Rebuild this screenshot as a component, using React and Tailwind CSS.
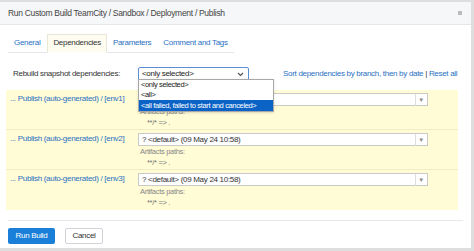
import React from "react";

const font = { fontFamily: '"Liberation Sans", Arial, sans-serif' };

const Chevron = () => (
  <svg width="7" height="5" viewBox="0 0 7 5" className="text-[#555]">
    <path d="M1 1l2.5 2.5L6 1" fill="none" stroke="currentColor" strokeWidth="1.2" />
  </svg>
);

const DepRow = ({ env, last }) => (
  <div className={`flex h-[40px] ${last ? "" : "border-b border-[#f1ecc4]"}`}>
    <div className="w-[132px] pl-[4px] pt-[3px] text-[#2a70c3] whitespace-nowrap">... Publish (auto-generated) / [{env}]</div>
    <div className="flex-1 pt-[3px]">
      <div className="w-[290px] h-[13px] bg-white border border-[#c9c9c9] flex items-center justify-between pl-[3px] pr-[3px] text-[#333]">
        <span>? &lt;default&gt; (09 May 24 10:58)</span>
        <span className="border-l border-[#ddd] pl-[2px] text-[#888] text-[6px]">▼</span>
      </div>
      <div className="pl-[2px] pt-[1px] text-[#888] text-[7.5px] leading-[10px]">Artifacts paths:</div>
      <div className="pl-[9px] pt-[1px] text-[#777] text-[7.5px] leading-[10px]">**/* =&gt; .</div>
    </div>
  </div>
);

export default function App() {
  return (
    <div style={font} className="w-[474px] h-[251px] bg-[#dedede] pt-[2px] pr-[3px] pb-[3px] text-[8px] tracking-[-0.3px] leading-[12px]">
      <div className="relative h-full bg-white flex flex-col">
        {/* header */}
        <div className="h-[23px] shrink-0 bg-[#f6f7f9] border-b border-[#e4e6ea] flex items-center justify-between px-[8px]">
          <span className="text-[#444] text-[8.5px] whitespace-nowrap">Run Custom Build TeamCity / Sandbox / Deployment / Publish</span>
          <span className="w-[4px] h-[4px] bg-[#bbb] mr-[1px]" />
        </div>

        {/* tabs */}
        <div className="mt-[9px] mx-[8px] self-start flex items-end border-b border-[#e4e6ea] text-[#2a70c3] whitespace-nowrap">
          <div className="pl-[6px] pr-[7px] pb-[3px] pt-[2px]">General</div>
          <div className="px-[5px] pb-[3px] pt-[2px] text-[#333] bg-[#fffdf0] border border-[#e8e8d8] border-b-white -mb-px">Dependencies</div>
          <div className="px-[6px] pb-[3px] pt-[2px]">Parameters</div>
          <div className="px-[6px] pb-[3px] pt-[2px]">Comment and Tags</div>
        </div>

        {/* rebuild row */}
        <div className="mt-[14px] flex items-center h-[14px] pl-[13px] whitespace-nowrap">
          <div className="w-[125px] text-[#333]">Rebuild snapshot dependencies:</div>
          <div className="w-[111px] h-[14px] border border-[#5a8fd6] rounded-[2px] flex items-center justify-between pl-[3px] pr-[4px] text-[#222]">
            <span>&lt;only selected&gt;</span>
            <Chevron />
          </div>
          <div className="ml-[34px] text-[#2a70c3]">
            Sort dependencies by branch, then by date <span className="text-[#333]">|</span> Reset all
          </div>
        </div>

        {/* dependency rows */}
        <div className="mt-[9px] ml-[6px] w-[452px] bg-[#fffcd6]">
          <DepRow env="env1" />
          <DepRow env="env2" />
          <DepRow env="env3" last />
        </div>

        <div className="mt-[10px] mx-[8px] border-t border-[#e8e8ee]" />

        {/* buttons */}
        <div className="mt-[7px] ml-[8px] flex gap-[10px]">
          <button className="w-[47px] h-[16px] bg-[#1a7fd9] rounded-[2px] text-white">Run Build</button>
          <button className="w-[38px] h-[16px] bg-white border border-[#cfd3d8] rounded-[2px] text-[#333]">Cancel</button>
        </div>

        {/* open dropdown */}
        <div className="absolute left-[138px] top-[77px] w-[136px] bg-white border border-[#a8a8a8] shadow-sm text-[#222] whitespace-nowrap text-[7.5px] tracking-[-0.35px]">
          <div className="h-[10px] leading-[10px] pl-[2px]">&lt;only selected&gt;</div>
          <div className="h-[10px] leading-[10px] pl-[2px]">&lt;all&gt;</div>
          <div className="h-[11px] leading-[11px] pl-[2px] bg-[#0b63c6] text-white">&lt;all failed, failed to start and canceled&gt;</div>
        </div>
      </div>
    </div>
  );
}
